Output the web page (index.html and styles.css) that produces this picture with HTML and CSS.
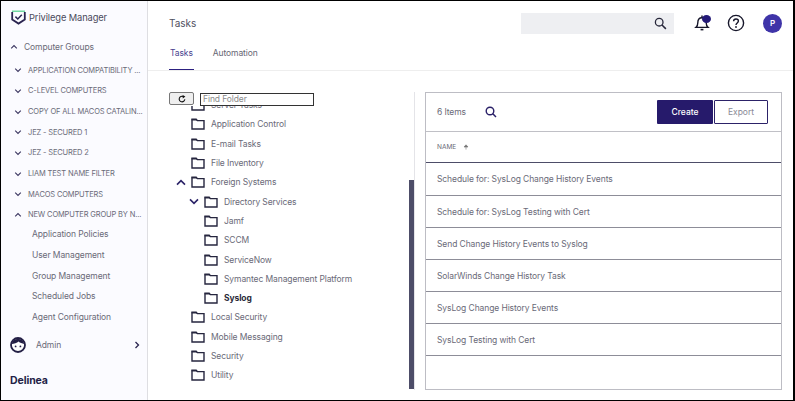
FILE: index.html
```html
<!DOCTYPE html>
<html lang="en">
<head>
  <meta charset="UTF-8">
  <title>Tasks - Privilege Manager</title>
  <link rel="stylesheet" href="styles.css">
</head>
<body>
  <svg class="defs" width="0" height="0">
    <symbol id="folder" viewBox="0 0 14 12">
      <path d="M1 3V1.2h4.2L6.4 2.6H13V11H1z" fill="none" stroke="#26263f" stroke-width="1.4"/>
      <path d="M.6 1h4.8l1.2 1.6H.6z" fill="#26263f"/>
    </symbol>
    <symbol id="chev-down" viewBox="0 0 8 6">
      <path d="M1.2 1.6 4 4.4l2.8-2.8" fill="none" stroke="#3a3560" stroke-width="1.1"/>
    </symbol>
    <symbol id="chev-up" viewBox="0 0 8 6">
      <path d="M1.2 4.4 4 1.6l2.8 2.8" fill="none" stroke="#3a3560" stroke-width="1.1"/>
    </symbol>
    <symbol id="toggle-down" viewBox="0 0 10 7">
      <path d="M1 1.4 5 5.4l4-4" fill="none" stroke="#2c2468" stroke-width="1.6"/>
    </symbol>
    <symbol id="toggle-up" viewBox="0 0 10 7">
      <path d="M1 5.6 5 1.6l4 4" fill="none" stroke="#2c2468" stroke-width="1.6"/>
    </symbol>
  </svg>

  <div class="app">
    <aside class="sidebar">
      <div class="brand">
        <svg class="brand-icon" viewBox="0 0 15 15">
          <path d="M1 1.2h13" stroke="#4fd08a" stroke-width="1.2"/>
          <path d="M1.2 2v7.6l6.3 4 6.3-4V2" fill="none" stroke="#2a2450" stroke-width="1.8"/>
          <path d="M4.4 6.6 6.8 9l4-4.2" fill="none" stroke="#2a2450" stroke-width="1.5"/>
        </svg>
        <span>Privilege Manager</span>
      </div>

      <div class="nav-root">
        <svg class="chev"><use href="#chev-up"/></svg>
        <span>Computer Groups</span>
      </div>

      <ul class="groups">
        <li><svg class="chev"><use href="#chev-down"/></svg><span>APPLICATION COMPATIBILITY ...</span></li>
        <li><svg class="chev"><use href="#chev-down"/></svg><span>C-LEVEL COMPUTERS</span></li>
        <li><svg class="chev"><use href="#chev-down"/></svg><span>COPY OF ALL MACOS CATALIN...</span></li>
        <li><svg class="chev"><use href="#chev-down"/></svg><span>JEZ - SECURED 1</span></li>
        <li><svg class="chev"><use href="#chev-down"/></svg><span>JEZ - SECURED 2</span></li>
        <li><svg class="chev"><use href="#chev-down"/></svg><span>LIAM TEST NAME FILTER</span></li>
        <li><svg class="chev"><use href="#chev-down"/></svg><span>MACOS COMPUTERS</span></li>
        <li><svg class="chev"><use href="#chev-up"/></svg><span>NEW COMPUTER GROUP BY N...</span></li>
      </ul>

      <ul class="sub-nav">
        <li>Application Policies</li>
        <li>User Management</li>
        <li>Group Management</li>
        <li>Scheduled Jobs</li>
        <li>Agent Configuration</li>
      </ul>

      <div class="admin">
        <svg class="admin-face" viewBox="0 0 16 16">
          <circle cx="8" cy="8" r="7" fill="#fff" stroke="#231f45" stroke-width="1.8"/>
          <path d="M1.5 7C3 3 5 2 8 2s5 1 6.5 5C12 6.6 10 6 8.6 4.6 7 6 4 6.8 1.5 7z" fill="#231f45"/>
          <circle cx="5.6" cy="9.4" r=".9" fill="#231f45"/>
          <circle cx="10.4" cy="9.4" r=".9" fill="#231f45"/>
        </svg>
        <span>Admin</span>
        <svg class="admin-arrow" viewBox="0 0 6 8"><path d="M1.5 1 4.5 4l-3 3" fill="none" stroke="#2a2450" stroke-width="1.3"/></svg>
      </div>

      <div class="company">Delinea</div>
    </aside>

    <main class="main">
      <header class="topbar">
        <h1>Tasks</h1>
        <div class="search-box">
          <svg class="search-icon" viewBox="0 0 14 14"><circle cx="5.6" cy="5.6" r="4.1" fill="none" stroke="#26263a" stroke-width="1.4"/><path d="m8.6 8.6 4.2 4.2" stroke="#26263a" stroke-width="1.6"/></svg>
        </div>
        <div class="bell">
          <svg viewBox="0 0 16 18"><path d="M2 13.4c1.4-1.2 1.8-2.4 1.8-4.6 0-3 1.6-5 4.2-5s4.2 2 4.2 5c0 2.2.4 3.4 1.8 4.6z" fill="none" stroke="#16162a" stroke-width="1.4"/><path d="M8 1.6v2" stroke="#16162a" stroke-width="1.4"/><path d="M6.6 15.6h2.8" stroke="#16162a" stroke-width="1.6"/></svg>
          <i class="bell-dot"></i>
        </div>
        <svg class="help" viewBox="0 0 18 18"><circle cx="9" cy="9" r="7.6" fill="none" stroke="#16162a" stroke-width="1.4"/><path d="M6.6 7.2C6.6 5.8 7.6 5 9 5s2.4.9 2.4 2.1c0 1.8-2.4 1.9-2.4 3.8" fill="none" stroke="#16162a" stroke-width="1.4"/><circle cx="9" cy="13" r=".9" fill="#16162a"/></svg>
        <div class="avatar">P</div>
      </header>

      <nav class="tabs">
        <a class="tab active">Tasks</a>
        <a class="tab">Automation</a>
      </nav>

      <div class="content">
        <section class="tree-pane">
          <div class="tree-tools">
            <button class="refresh">
              <svg viewBox="0 0 8 8"><path d="M6.8 4.2A2.8 2.8 0 1 1 5.2 1.5" fill="none" stroke="#111" stroke-width="1.1"/><path d="M4.6 0 7.4 1.6 4.8 3.4z" fill="#111"/></svg>
            </button>
            <div class="find">Find Folder</div>
          </div>
          <div class="tree">
            <div class="node lvl1"><svg class="folder"><use href="#folder"/></svg>Server Tasks</div>
            <div class="node lvl1"><svg class="folder"><use href="#folder"/></svg>Application Control</div>
            <div class="node lvl1"><svg class="folder"><use href="#folder"/></svg>E-mail Tasks</div>
            <div class="node lvl1"><svg class="folder"><use href="#folder"/></svg>File Inventory</div>
            <div class="node lvl1"><svg class="toggle"><use href="#toggle-up"/></svg><svg class="folder"><use href="#folder"/></svg>Foreign Systems</div>
            <div class="node lvl2"><svg class="toggle"><use href="#toggle-down"/></svg><svg class="folder"><use href="#folder"/></svg>Directory Services</div>
            <div class="node lvl2"><svg class="folder"><use href="#folder"/></svg>Jamf</div>
            <div class="node lvl2"><svg class="folder"><use href="#folder"/></svg>SCCM</div>
            <div class="node lvl2"><svg class="folder"><use href="#folder"/></svg>ServiceNow</div>
            <div class="node lvl2"><svg class="folder"><use href="#folder"/></svg>Symantec Management Platform</div>
            <div class="node lvl2 selected"><svg class="folder"><use href="#folder"/></svg>Syslog</div>
            <div class="node lvl1"><svg class="folder"><use href="#folder"/></svg>Local Security</div>
            <div class="node lvl1"><svg class="folder"><use href="#folder"/></svg>Mobile Messaging</div>
            <div class="node lvl1"><svg class="folder"><use href="#folder"/></svg>Security</div>
            <div class="node lvl1"><svg class="folder"><use href="#folder"/></svg>Utility</div>
          </div>
          <div class="scroll-track"><div class="scroll-thumb"></div></div>
        </section>

        <section class="grid">
          <div class="grid-top">
            <span class="count">6 Items</span>
            <svg class="grid-search" viewBox="0 0 12 12"><circle cx="5" cy="5" r="3.8" fill="none" stroke="#2a2068" stroke-width="1.4"/><path d="m7.8 7.8 3.2 3.2" stroke="#2a2068" stroke-width="1.5"/></svg>
            <button class="btn btn-create">Create</button>
            <button class="btn btn-export">Export</button>
          </div>
          <div class="grid-head">
            <span>NAME</span>
            <svg class="sort" viewBox="0 0 6 6"><path d="M3 5.6V2M1 3l2-2.2L5 3z" fill="#777" stroke="#777" stroke-width=".6"/></svg>
          </div>
          <div class="grid-row">Schedule for: SysLog Change History Events</div>
          <div class="grid-row">Schedule for: SysLog Testing with Cert</div>
          <div class="grid-row">Send Change History Events to Syslog</div>
          <div class="grid-row">SolarWinds Change History Task</div>
          <div class="grid-row">SysLog Change History Events</div>
          <div class="grid-row">SysLog Testing with Cert</div>
        </section>
      </div>
    </main>
  </div>
</body>
</html>
```

FILE: styles.css
```css
* {
  box-sizing: border-box;
}

html, body {
  height: 100%;
}

body {
  margin: 0;
  font-family: Inter, 'Liberation Sans', sans-serif;
  font-size: 8.5px;
  letter-spacing: -0.1px;
  color: #6a6a78;
  background-color: white;
}

.defs {
  position: absolute;
}

ul {
  list-style: none;
  margin: 0;
  padding: 0;
}

.app {
  display: flex;
  height: 401px;
  border: 1px solid #000;
  border-right-width: 2px;
}

/* sidebar */
.sidebar {
  width: 147px;
  flex-shrink: 0;
  padding-top: 8px;
  background-color: #fbfbff;
  border-right: 1px solid #dedee2;
}

.brand {
  display: flex;
  align-items: center;
  height: 16px;
  padding-left: 10px;
  font-size: 9.3px;
  color: #4a4a5c;
}

.brand-icon {
  width: 15px;
  height: 15px;
  margin-right: 3px;
}

.chev {
  width: 8px;
  height: 6px;
  flex-shrink: 0;
}

.nav-root {
  display: flex;
  align-items: center;
  height: 16px;
  margin-top: 14px;
  padding-left: 9px;
}

.nav-root .chev {
  margin-right: 6px;
}

.groups {
  margin-top: 5px;
}

.groups li {
  display: flex;
  align-items: center;
  height: 20.65px;
  padding-left: 13px;
  font-size: 7.5px;
  letter-spacing: -0.15px;
  white-space: nowrap;
}

.groups .chev {
  margin-right: 6px;
}

.sub-nav {
  margin-top: -1px;
  padding-left: 31px;
}

.sub-nav li {
  height: 20.7px;
  line-height: 20.7px;
}

.admin {
  display: flex;
  align-items: center;
  height: 18px;
  margin-top: 8px;
  padding-left: 9px;
}

.admin-face {
  width: 16px;
  height: 16px;
  margin-right: 10px;
}

.admin-arrow {
  width: 6px;
  height: 8px;
  margin-left: auto;
  margin-right: 7px;
}

.company {
  margin-top: 20px;
  padding-left: 9px;
  font-size: 10.5px;
  font-weight: 700;
  color: #241f47;
}

/* main area */
.main {
  flex: 1;
  display: flex;
  flex-direction: column;
  min-width: 0;
}

.topbar {
  display: flex;
  align-items: center;
  height: 39px;
  padding-top: 5px;
  padding-left: 21px;
}

.topbar h1 {
  margin: 0 auto 0 0;
  font-size: 10px;
  font-weight: 400;
  letter-spacing: 0;
  color: #4f4f60;
}

.search-box {
  display: flex;
  align-items: center;
  justify-content: flex-end;
  width: 153px;
  height: 21px;
  padding-right: 7px;
  background-color: #eeeff2;
}

.search-icon {
  width: 13px;
  height: 13px;
}

.bell {
  position: relative;
  width: 16px;
  height: 18px;
  margin-left: 20px;
}

.bell svg {
  display: block;
  width: 16px;
  height: 18px;
}

.bell-dot {
  position: absolute;
  top: 1px;
  right: -1px;
  width: 9px;
  height: 8px;
  border-radius: 50%;
  background-color: #241a78;
}

.help {
  width: 18px;
  height: 18px;
  margin-left: 17px;
}

.avatar {
  width: 19px;
  height: 19px;
  margin-left: 18px;
  margin-right: 11px;
  border-radius: 50%;
  background-color: #3f34a8;
  color: white;
  font-size: 8px;
  font-weight: 600;
  line-height: 19px;
  text-align: center;
}

.tabs {
  display: flex;
  gap: 19px;
  height: 31px;
  padding: 6px 0 0 21px;
  border-bottom: 1px solid #eeeeee;
}

.tab {
  height: 24px;
  padding-top: 2px;
  color: #666674;
}

.tab.active {
  padding: 2px 1px 0;
  color: #4a3f8f;
  border-bottom: 1px solid #2c2080;
}

.content {
  flex: 1;
  display: flex;
  min-height: 0;
  padding-top: 21px;
}

/* folder tree */
.tree-pane {
  position: relative;
  width: 267px;
  flex-shrink: 0;
  height: 298px;
  overflow: hidden;
  border-right: 1px solid #e4e4e8;
}

.tree-tools {
  position: relative;
  z-index: 1;
  display: flex;
  gap: 6px;
  height: 14px;
  padding-left: 21px;
  background-color: white;
}

.refresh {
  display: flex;
  align-items: center;
  justify-content: center;
  width: 25px;
  height: 13px;
  padding: 0;
  background-color: #efefef;
  border: 1px solid #777;
  border-radius: 2px;
}

.refresh svg {
  width: 8px;
  height: 8px;
}

.find {
  width: 114px;
  height: 13px;
  margin-top: 1px;
  padding-left: 2px;
  border: 1px solid #333;
  line-height: 11px;
  color: #8a8a8a;
}

.tree {
  margin-top: -10.5px;
}

.node {
  position: relative;
  display: flex;
  align-items: center;
  height: 19.3px;
  white-space: nowrap;
}

.lvl1 {
  padding-left: 43px;
}

.lvl2 {
  padding-left: 56px;
}

.folder {
  width: 14px;
  height: 12px;
  margin-right: 6px;
  flex-shrink: 0;
}

.toggle {
  position: absolute;
  width: 10px;
  height: 7px;
  margin-left: -15px;
}

.selected {
  font-weight: 700;
  color: #2b2b3a;
}

.scroll-track {
  position: absolute;
  top: 0;
  right: 0;
  width: 5px;
  height: 297px;
}

.scroll-thumb {
  width: 100%;
  height: 209px;
  margin-top: 88px;
  background-color: #4d4d68;
}

/* grid */
.grid {
  width: 357px;
  height: 298px;
  margin-left: 10px;
  border: 1px solid #bdbdc4;
}

.grid-top {
  display: flex;
  align-items: center;
  height: 38px;
  padding-left: 11px;
}

.count {
  margin-right: 19px;
}

.grid-search {
  width: 12px;
  height: 12px;
  margin-right: auto;
}

.btn {
  height: 24px;
  padding: 0;
  font-family: inherit;
  font-size: 8.5px;
  border-radius: 1px;
}

.btn-create {
  width: 56px;
  background-color: #261a6b;
  border: none;
  color: white;
  font-weight: 500;
}

.btn-export {
  width: 54px;
  margin-left: 1px;
  margin-right: 13px;
  background-color: white;
  border: 1px solid #2c2268;
  color: #8a8a96;
}

.grid-head {
  display: flex;
  align-items: center;
  gap: 7px;
  height: 32px;
  padding-left: 11px;
  border-top: 1px solid #c0c0c6;
  border-bottom: 1px solid #4d4d68;
  font-size: 6.5px;
  letter-spacing: 0;
}

.sort {
  width: 6px;
  height: 6px;
}

.grid-row {
  display: flex;
  align-items: center;
  height: 32px;
  padding-left: 11px;
  border-bottom: 1px solid #8d8d98;
}

.grid-head + .grid-row {
  height: 33px;
}
```
